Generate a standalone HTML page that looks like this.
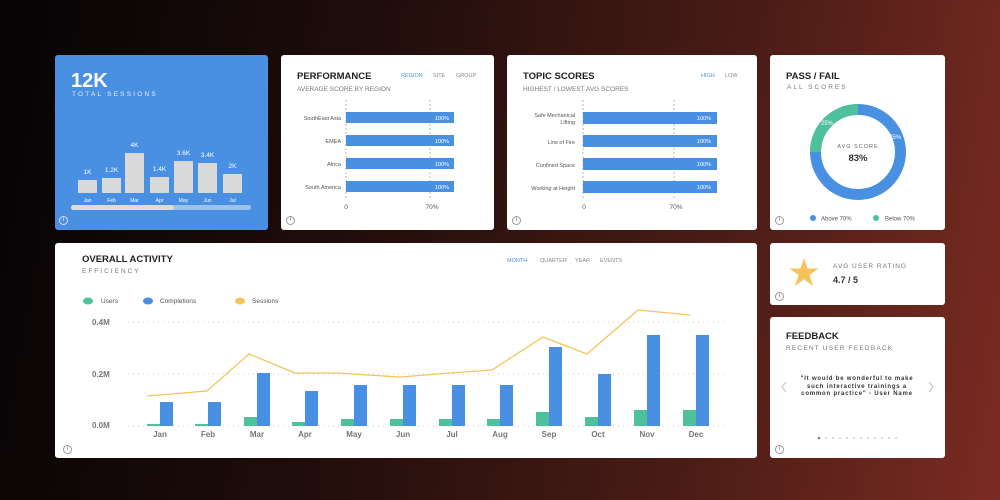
<!DOCTYPE html>
<html><head><meta charset="utf-8"><style>
*{margin:0;padding:0;box-sizing:border-box}
body{width:1000px;height:500px;overflow:hidden;background:linear-gradient(100deg,#050304 0%,#1f0d0b 35%,#4a1c16 70%,#7a2b22 100%);font-family:"Liberation Sans",sans-serif;position:relative}
.card{position:absolute;background:#fff;border-radius:3px}
.a{position:absolute;white-space:nowrap}
.t{font-weight:bold;font-size:9.5px;color:#222}
.s{font-size:6.5px;color:#777}
.ls{letter-spacing:2px}
.tab{font-size:5.5px;color:#888}
.info{position:absolute;width:9px;height:9px;border:1px solid #999;border-radius:50%;font-size:6px;color:#666;text-align:center;line-height:7px;font-family:"Liberation Sans",sans-serif}
</style></head><body>

<div class="card" style="left:55px;top:55px;width:213px;height:175px;background:#4a90e2">
<div class="a" style="left:16px;top:15px;font-size:20px;font-weight:bold;color:#fff">12K</div>
<div class="a" style="left:17px;top:36px;font-size:6.5px;color:#e6efff;letter-spacing:2.2px">TOTAL SESSIONS</div>
<svg class="a" style="left:0;top:0" width="213" height="175" font-family="Liberation Sans" font-size="6.5" fill="#f0f4fa">
<g fill="#d9d9d9">
<rect x="23" y="125" width="19" height="13"/><rect x="47" y="123" width="19" height="15"/><rect x="70" y="98" width="19" height="40"/><rect x="95" y="122" width="19" height="16"/><rect x="119" y="106" width="19" height="32"/><rect x="143" y="108" width="19" height="30"/><rect x="168" y="119" width="19" height="19"/></g>
<g text-anchor="middle" fill="#fff"><text x="32.5" y="119">1K</text><text x="56.5" y="117">1.2K</text><text x="79.5" y="92">4K</text><text x="104.5" y="116">1.4K</text><text x="128.5" y="100">3.6K</text><text x="152.5" y="102">3.4K</text><text x="177.5" y="113">2K</text>
<g font-size="5"><text x="32.5" y="147">Jan</text><text x="56.5" y="147">Feb</text><text x="79.5" y="147">Mar</text><text x="104.5" y="147">Apr</text><text x="128.5" y="147">May</text><text x="152.5" y="147">Jun</text><text x="177.5" y="147">Jul</text></g></g>
<rect x="16" y="150" width="180" height="5" rx="2.5" fill="#9cc2f0"/><rect x="16" y="150" width="103" height="5" rx="2.5" fill="#dcdcdc"/>
</svg>
<div class="info" style="left:4px;top:161px;border-color:#dde;color:#fff">i</div>
</div>

<div class="card" style="left:281px;top:55px;width:213px;height:175px">
<div class="a t" style="left:16px;top:16px">PERFORMANCE</div>
<div class="a tab" style="left:120px;top:18px;color:#4a90e2">REGION</div>
<div class="a tab" style="left:152px;top:18px">SITE</div>
<div class="a tab" style="left:175px;top:18px">GROUP</div>
<div class="a s" style="left:16px;top:31px">AVERAGE SCORE BY REGION</div>
<svg class="a" style="left:0;top:0" width="213" height="175" font-family="Liberation Sans" font-size="5.5" fill="#555">
<g stroke="#999" stroke-dasharray="2,2" stroke-width=".7"><line x1="65" y1="45" x2="65" y2="145"/><line x1="149" y1="45" x2="149" y2="145"/></g>
<g fill="#4a90e2"><rect x="65" y="57" width="108" height="11"/><rect x="65" y="80" width="108" height="11"/><rect x="65" y="103" width="108" height="11"/><rect x="65" y="126" width="108" height="11"/></g>
<g fill="#fff" text-anchor="end"><text x="168" y="65">100%</text><text x="168" y="88">100%</text><text x="168" y="111">100%</text><text x="168" y="134">100%</text></g>
<g text-anchor="end"><text x="60" y="65">SouthEast Asia</text><text x="60" y="88">EMEA</text><text x="60" y="111">Africa</text><text x="60" y="134">South America</text></g>
<g text-anchor="middle" font-size="6.5"><text x="65" y="154">0</text><text x="151" y="154">70%</text></g>
</svg>
<div class="info" style="left:5px;top:161px">i</div>
</div>

<div class="card" style="left:507px;top:55px;width:250px;height:175px">
<div class="a t" style="left:16px;top:16px">TOPIC SCORES</div>
<div class="a tab" style="left:194px;top:18px;color:#4a90e2">HIGH</div>
<div class="a tab" style="left:218px;top:18px">LOW</div>
<div class="a s" style="left:16px;top:31px">HIGHEST / LOWEST AVG SCORES</div>
<svg class="a" style="left:0;top:0" width="250" height="175" font-family="Liberation Sans" font-size="5.5" fill="#555">
<g stroke="#999" stroke-dasharray="2,2" stroke-width=".7"><line x1="76" y1="45" x2="76" y2="145"/><line x1="167" y1="45" x2="167" y2="145"/></g>
<g fill="#4a90e2"><rect x="76" y="57" width="134" height="12"/><rect x="76" y="80" width="134" height="12"/><rect x="76" y="103" width="134" height="12"/><rect x="76" y="126" width="134" height="12"/></g>
<g fill="#fff" text-anchor="end"><text x="204" y="65">100%</text><text x="204" y="88">100%</text><text x="204" y="111">100%</text><text x="204" y="134">100%</text></g>
<g text-anchor="end"><text x="68" y="62">Safe Mechanical</text><text x="68" y="69">Lifting</text><text x="68" y="89">Line of Fire</text><text x="68" y="112">Confined Space</text><text x="68" y="135">Working at Height</text></g>
<g text-anchor="middle" font-size="6.5"><text x="77" y="154">0</text><text x="169" y="154">70%</text></g>
</svg>
<div class="info" style="left:5px;top:161px">i</div>
</div>

<div class="card" style="left:770px;top:55px;width:175px;height:175px">
<div class="a t" style="left:16px;top:16px">PASS / FAIL</div>
<div class="a s ls" style="left:17px;top:29px">ALL SCORES</div>
<svg class="a" style="left:0;top:0" width="175" height="175" font-family="Liberation Sans">
<circle cx="88" cy="97" r="42.5" fill="none" stroke="#4a90e2" stroke-width="11"/>
<path d="M88 54.5 A42.5 42.5 0 0 0 45.5 97" fill="none" stroke="#4ec09c" stroke-width="11"/>
<text x="51" y="70" font-size="6" fill="#fff">25%</text><text x="119" y="84" font-size="6" fill="#fff">75%</text>
<text x="88" y="93" font-size="5.5" fill="#666" text-anchor="middle" letter-spacing="1">AVG SCORE</text>
<text x="88" y="106" font-size="9.5" font-weight="bold" fill="#333" text-anchor="middle">83%</text>
<circle cx="43" cy="163" r="3" fill="#4a90e2"/><text x="51" y="165.5" font-size="6" fill="#555">Above 70%</text>
<circle cx="106" cy="163" r="3" fill="#4ec09c"/><text x="115" y="165.5" font-size="6" fill="#555">Below 70%</text>
</svg>
<div class="info" style="left:5px;top:161px">i</div>
</div>

<div class="card" style="left:55px;top:243px;width:702px;height:215px">
<div class="a t" style="left:27px;top:11px">OVERALL ACTIVITY</div>
<div class="a s ls" style="left:27px;top:25px">EFFICIENCY</div>
<div class="a tab" style="left:452px;top:15px;color:#4a90e2">MONTH</div>
<div class="a tab" style="left:485px;top:15px">QUARTER</div>
<div class="a tab" style="left:520px;top:15px">YEAR</div>
<div class="a tab" style="left:545px;top:15px">EVENTS</div>
<div class="info" style="left:8px;top:202px">i</div>
</div>
<svg class="a" style="left:0;top:0" width="1000" height="500" font-family="Liberation Sans">
<ellipse cx="88" cy="301" rx="5" ry="3.5" fill="#4ec09c"/><text x="101" y="303" font-size="6.5" fill="#555">Users</text>
<ellipse cx="148" cy="301" rx="5" ry="3.5" fill="#4a90e2"/><text x="160" y="303" font-size="6.5" fill="#555">Completions</text>
<ellipse cx="240" cy="301" rx="5" ry="3.5" fill="#f5c35c"/><text x="252" y="303" font-size="6.5" fill="#555">Sessions</text>
<g font-size="8" font-weight="bold" fill="#777"><text x="92" y="325">0.4M</text><text x="92" y="377">0.2M</text><text x="92" y="428">0.0M</text></g>
<g stroke="#ccc" stroke-dasharray="1,4" stroke-width="1"><line x1="128" y1="322" x2="725" y2="322"/><line x1="128" y1="374" x2="725" y2="374"/><line x1="128" y1="426" x2="725" y2="426"/></g>
<g fill="#4ec09c">
<rect x="147" y="424" width="13" height="2"/><rect x="195" y="424" width="13" height="2"/><rect x="244" y="417" width="13" height="9"/><rect x="292" y="422" width="13" height="4"/><rect x="341" y="419" width="13" height="7"/><rect x="390" y="419" width="13" height="7"/><rect x="439" y="419" width="13" height="7"/><rect x="487" y="419" width="13" height="7"/><rect x="536" y="412" width="13" height="14"/><rect x="585" y="417" width="13" height="9"/><rect x="634" y="410" width="13" height="16"/><rect x="683" y="410" width="13" height="16"/></g>
<g fill="#4a90e2">
<rect x="160" y="402" width="13" height="24"/><rect x="208" y="402" width="13" height="24"/><rect x="257" y="373" width="13" height="53"/><rect x="305" y="391" width="13" height="35"/><rect x="354" y="385" width="13" height="41"/><rect x="403" y="385" width="13" height="41"/><rect x="452" y="385" width="13" height="41"/><rect x="500" y="385" width="13" height="41"/><rect x="549" y="347" width="13" height="79"/><rect x="598" y="374" width="13" height="52"/><rect x="647" y="335" width="13" height="91"/><rect x="696" y="335" width="13" height="91"/></g>
<polyline points="147,396 207,391 249,354 295,373 336,373 400,377 450,373 492,370 543,337 587,354 638,310 690,315" fill="none" stroke="#f5c35c" stroke-width="1.3"/>
<g font-size="8" font-weight="bold" fill="#777" text-anchor="middle"><text x="160" y="437">Jan</text><text x="208" y="437">Feb</text><text x="257" y="437">Mar</text><text x="305" y="437">Apr</text><text x="354" y="437">May</text><text x="403" y="437">Jun</text><text x="452" y="437">Jul</text><text x="500" y="437">Aug</text><text x="549" y="437">Sep</text><text x="598" y="437">Oct</text><text x="647" y="437">Nov</text><text x="696" y="437">Dec</text></g>
</svg>

<div class="card" style="left:770px;top:243px;width:175px;height:62px">
<svg class="a" style="left:19px;top:15px" width="30" height="29" viewBox="0 0 30 29"><polygon points="15,0 18.5,10.5 29.5,10.5 20.5,17 24,28 15,21.3 6,28 9.5,17 0.5,10.5 11.5,10.5" fill="#f5c35c"/></svg>
<div class="a s" style="left:63px;top:20px;letter-spacing:1px">AVG USER RATING</div>
<div class="a" style="left:63px;top:32px;font-size:9px;font-weight:bold;color:#333">4.7 / 5</div>
<div class="info" style="left:5px;top:49px">i</div>
</div>

<div class="card" style="left:770px;top:317px;width:175px;height:141px">
<div class="a t" style="left:16px;top:14px">FEEDBACK</div>
<div class="a s" style="left:16px;top:28px;letter-spacing:1.2px">RECENT USER FEEDBACK</div>
<svg class="a" style="left:0;top:0" width="175" height="141">
<polyline points="16,65 12,70 16,75" fill="none" stroke="#bbb" stroke-width="1"/>
<polyline points="159,65 163,70 159,75" fill="none" stroke="#bbb" stroke-width="1"/>
<g fill="#ccc"><circle cx="49" cy="121" r="1.2" fill="#777"/><circle cx="56" cy="121" r="1"/><circle cx="63" cy="121" r="1"/><circle cx="70" cy="121" r="1"/><circle cx="77" cy="121" r="1"/><circle cx="84" cy="121" r="1"/><circle cx="91" cy="121" r="1"/><circle cx="98" cy="121" r="1"/><circle cx="105" cy="121" r="1"/><circle cx="112" cy="121" r="1"/><circle cx="119" cy="121" r="1"/><circle cx="126" cy="121" r="1"/></g></svg>
<div class="a" style="left:27px;top:59px;width:120px;text-align:center;font-size:6px;line-height:7.5px;color:#333;letter-spacing:.8px;font-weight:bold">"It would be wonderful to make<br>such interactive trainings a<br>common practice" - User Name</div>
<div class="info" style="left:5px;top:128px">i</div>
</div>
</body></html>
